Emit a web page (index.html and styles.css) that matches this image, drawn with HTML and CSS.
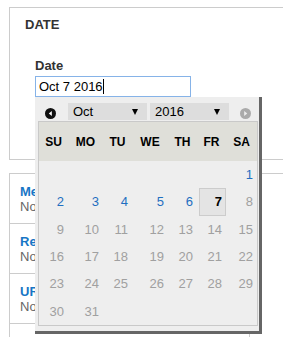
FILE: index.html
```html
<!DOCTYPE html>
<html lang="en">
<head>
    <meta charset="UTF-8">
    <meta name="viewport" content="width=device-width, initial-scale=1.0">
    <title>Date field</title>
    <link rel="stylesheet" href="styles.css">
</head>
<body>
    <div class="page">
        <section class="panel">
            <h2 class="panel-title">DATE</h2>
            <div class="field">
                <label for="date" class="field-label">Date</label>
                <div class="date-wrap">
                    <input id="date" class="date-input" type="text" value="Oct 7 2016">
                    <span class="caret"></span>
                    <div class="calendar">
                        <div class="cal-nav">
                            <svg class="cal-arrow" width="11" height="11" viewBox="0 0 11 11">
                                <circle cx="5.5" cy="5.5" r="5.5" fill="#111"/>
                                <path d="M6.8 3 L3.8 5.5 L6.8 8 Z" fill="#fff"/>
                            </svg>
                            <span class="cal-select cal-month">Oct</span>
                            <span class="cal-select cal-year">2016</span>
                            <svg class="cal-arrow cal-next" width="11" height="11" viewBox="0 0 11 11">
                                <circle cx="5.5" cy="5.5" r="5.5" fill="#aaa"/>
                                <path d="M4.2 3 L7.2 5.5 L4.2 8 Z" fill="#eee"/>
                            </svg>
                        </div>
                        <div class="cal-grid">
                            <span class="dow">SU</span>
                            <span class="dow">MO</span>
                            <span class="dow">TU</span>
                            <span class="dow">WE</span>
                            <span class="dow">TH</span>
                            <span class="dow">FR</span>
                            <span class="dow">SA</span>

                            <span class="day"></span>
                            <span class="day"></span>
                            <span class="day"></span>
                            <span class="day"></span>
                            <span class="day"></span>
                            <span class="day"></span>
                            <span class="day active">1</span>

                            <span class="day active">2</span>
                            <span class="day active">3</span>
                            <span class="day active">4</span>
                            <span class="day active">5</span>
                            <span class="day active">6</span>
                            <span class="day selected">7</span>
                            <span class="day">8</span>

                            <span class="day">9</span>
                            <span class="day">10</span>
                            <span class="day">11</span>
                            <span class="day">12</span>
                            <span class="day">13</span>
                            <span class="day">14</span>
                            <span class="day">15</span>

                            <span class="day">16</span>
                            <span class="day">17</span>
                            <span class="day">18</span>
                            <span class="day">19</span>
                            <span class="day">20</span>
                            <span class="day">21</span>
                            <span class="day">22</span>

                            <span class="day">23</span>
                            <span class="day">24</span>
                            <span class="day">25</span>
                            <span class="day">26</span>
                            <span class="day">27</span>
                            <span class="day">28</span>
                            <span class="day">29</span>

                            <span class="day">30</span>
                            <span class="day">31</span>
                        </div>
                    </div>
                </div>
            </div>
        </section>

        <ul class="list">
            <li class="list-item">
                <a class="item-title" href="#">Meeting date</a>
                <span class="item-value">Not set</span>
            </li>
            <li class="list-item">
                <a class="item-title" href="#">Review date</a>
                <span class="item-value">None</span>
            </li>
            <li class="list-item">
                <a class="item-title" href="#">URL</a>
                <span class="item-value">None</span>
            </li>
            <li class="list-item">
                <a class="item-title" href="#">Corresponding item</a>
                <span class="item-value">None</span>
            </li>
        </ul>
    </div>
</body>
</html>
```

FILE: styles.css
```css
html, body {
    overflow: hidden;
}
body {
    margin: 0;
    font-family: "Liberation Sans", Arial, sans-serif;
    background: #fff;
    color: #333;
}
.page {
    padding: 7px 0 0 9px;
}
.panel {
    width: 320px;
    height: 142px;
    padding-top: 9px;
    border: 1px solid #ccc;
}
.panel-title {
    margin: 0 0 0 15px;
    font-size: 13px;
    line-height: 15px;
    font-weight: bold;
    color: #333;
}
.field {
    margin-top: 26px;
    padding-left: 25px;
}
.field-label {
    display: block;
    font-size: 13px;
    line-height: 15px;
    font-weight: bold;
    color: #333;
    margin-bottom: 3px;
}
.date-wrap {
    position: relative;
    width: 156px;
}
.date-input {
    display: block;
    box-sizing: border-box;
    width: 156px;
    height: 21px;
    margin: 0;
    padding: 0 3px;
    border: 1px solid #86b3e8;
    font-family: "Liberation Sans", Arial, sans-serif;
    font-size: 13px;
    color: #000;
    outline: none;
}
.caret {
    position: absolute;
    left: 68px;
    top: 3px;
    width: 1px;
    height: 15px;
    background: #000;
}

/* calendar popup */
.calendar {
    position: absolute;
    top: 21px;
    left: 0;
    width: 220px;
    padding: 0 1px 5px 3px;
    background: #eee;
    border-right: 3px solid #666;
    border-bottom: 3px solid #666;
    z-index: 2;
}
.cal-nav {
    display: flex;
    align-items: flex-start;
    height: 24px;
    padding-left: 7px;
}
.cal-arrow {
    margin-top: 11px;
    flex: none;
}
.cal-next {
    margin-left: 11px;
}
.cal-select {
    position: relative;
    box-sizing: border-box;
    width: 79px;
    height: 17px;
    margin-top: 6px;
    padding-left: 5px;
    background: #ddd;
    font-size: 13px;
    line-height: 17px;
    color: #000;
}
.cal-month {
    margin-left: 12px;
}
.cal-year {
    margin-left: 3px;
}
.cal-select::after {
    content: "";
    position: absolute;
    right: 9px;
    top: 6px;
    border-left: 3px solid transparent;
    border-right: 3px solid transparent;
    border-top: 6px solid #000;
}
.cal-grid {
    display: grid;
    grid-template-columns: 29px 35px 29px 36px 29px 29px 31px;
    grid-template-rows: 39px repeat(6, 27.33px);
    border: 1px solid #c9c9c9;
}
.dow {
    display: flex;
    align-items: center;
    justify-content: center;
    background: #dfdfd9;
    font-size: 12px;
    font-weight: bold;
    color: #000;
}
.day {
    box-sizing: border-box;
    padding-right: 4px;
    text-align: right;
    font-size: 13px;
    line-height: 27px;
    color: #a0a0a0;
}
.day.active {
    color: #1f6fc1;
}
.day.selected {
    margin-left: 2px;
    padding-right: 3px;
    line-height: 25px;
    border: 1px solid #ccc;
    background: #e4e4e4;
    font-weight: bold;
    color: #000;
}

/* list under the panel */
.list {
    margin: 13px 0 0;
    padding: 0;
    list-style: none;
    width: 320px;
    border-top: 1px solid #ccc;
    border-left: 1px solid #ccc;
}
.list-item {
    box-sizing: border-box;
    width: 240px;
    padding: 10px 10px 9px 10px;
    border-right: 1px solid #ccc;
    border-bottom: 1px solid #ccc;
    font-size: 13px;
    line-height: 15px;
    white-space: nowrap;
}
.item-title {
    display: block;
    font-weight: bold;
    color: #1776c5;
    text-decoration: none;
}
.item-value {
    display: block;
    color: #666;
}
```
